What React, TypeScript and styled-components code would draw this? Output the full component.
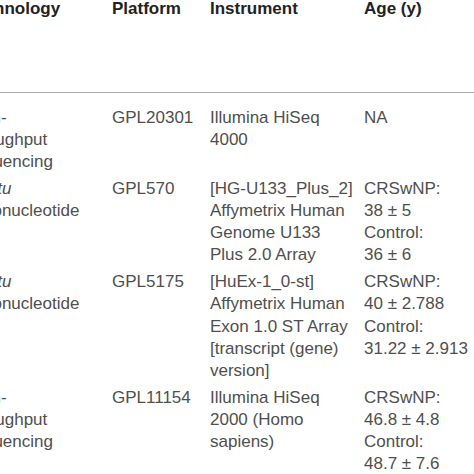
import React from 'react'
import styled, { createGlobalStyle } from 'styled-components'

const GlobalStyle = createGlobalStyle`
  html, body {
    margin: 0;
    padding: 0;
    background: #fff;
    overflow: hidden;
  }
  body {
    font-family: "Liberation Sans", Arial, Helvetica, sans-serif;
  }
`

const Viewport = styled.div`
  width: 474px;
  height: 474px;
  overflow: hidden;
`

const Table = styled.table`
  border-collapse: collapse;
  table-layout: fixed;
  width: 540px;
  margin: 0 0 0 -34px;
  font-size: 17px;
  line-height: 22.2px;
  color: #4f4f4f;
`

const HeadRow = styled.tr`
  height: 92px;
  border-bottom: 1px solid #a8a8a8;
`

const Th = styled.th<{ $w: number; $pr?: number }>`
  width: ${p => p.$w}px;
  padding: 0 ${p => p.$pr ?? 0}px 0 0;
  line-height: 18px;
  text-align: left;
  vertical-align: top;
  font-weight: bold;
  color: #222;
  box-sizing: border-box;
`

const Row = styled.tr<{ $first?: boolean }>`
  & > td {
    padding-top: ${p => (p.$first ? 14.2 : 3)}px;
  }
`

const Td = styled.td<{ $pr?: number }>`
  padding: 3px ${p => p.$pr ?? 0}px 1.5px 0;
  vertical-align: top;
  text-align: left;
`

const rows = [
  {
    tech: <>High-throughput sequencing</>,
    platform: 'GPL20301',
    instrument: 'Illumina HiSeq 4000',
    age: ['NA'],
  },
  {
    tech: <><em>In situ</em> oligonucleotide</>,
    platform: 'GPL570',
    instrument: '[HG-U133_Plus_2] Affymetrix Human Genome U133 Plus 2.0 Array',
    age: ['CRSwNP:', '38 ± 5', 'Control:', '36 ± 6'],
  },
  {
    tech: <><em>In situ</em> oligonucleotide</>,
    platform: 'GPL5175',
    instrument: '[HuEx-1_0-st] Affymetrix Human Exon 1.0 ST Array [transcript (gene) version]',
    age: ['CRSwNP:', '40 ± 2.788', 'Control:', '31.22 ± 2.913'],
  },
  {
    tech: <>High-throughput sequencing</>,
    platform: 'GPL11154',
    instrument: 'Illumina HiSeq 2000 (Homo sapiens)',
    age: ['CRSwNP:', '46.8 ± 4.8', 'Control:', '48.7 ± 7.6'],
  },
]

export default function App() {
  return (
    <Viewport>
      <GlobalStyle />
      <Table>
        <thead>
          <HeadRow>
            <Th $w={146} $pr={30}>Technology</Th>
            <Th $w={98}>Platform</Th>
            <Th $w={154} $pr={8}>Instrument</Th>
            <Th $w={142}>Age (y)</Th>
          </HeadRow>
        </thead>
        <tbody>
          {rows.map((r, i) => (
            <Row key={i} $first={i === 0}>
              <Td $pr={30}>{r.tech}</Td>
              <Td>{r.platform}</Td>
              <Td $pr={8}>{r.instrument}</Td>
              <Td>
                {r.age.map((a, j) => (
                  <div key={j}>{a}</div>
                ))}
              </Td>
            </Row>
          ))}
        </tbody>
      </Table>
    </Viewport>
  )
}
